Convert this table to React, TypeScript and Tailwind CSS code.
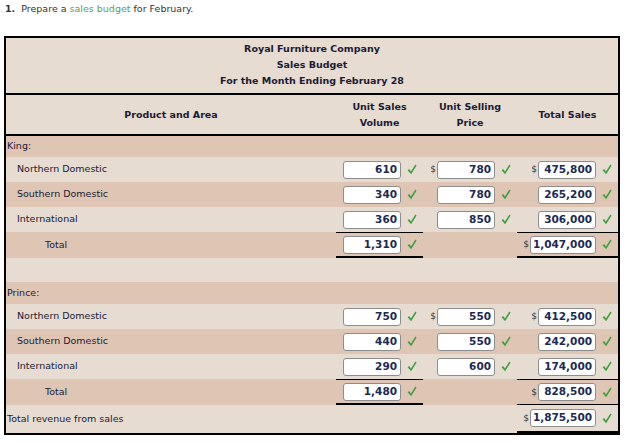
const font = { fontFamily: '"DejaVu Sans", Verdana, sans-serif' }

const COLS = 'grid grid-cols-[330px_87px_94px_101px]'
const LIGHT = 'bg-[#e6dcd1]'
const DARK = 'bg-[#dfc5b3]'

function Check() {
  return (
    <svg width="10" height="11" viewBox="0 0 10 11" className="block">
      <path d="M0.6 6.2 L2.2 5 L3.9 7.4 L8.4 0.6 L9.6 1.6 L4.1 10.2 Z" fill="#3f9f3f" />
    </svg>
  )
}

interface AmountProps {
  value: string
  dollar?: boolean
  wide?: boolean
}

function Amount({ value, dollar, wide }: AmountProps) {
  return (
    <div className="flex h-full items-center justify-end">
      {dollar && <span className="mr-[1px] text-[9px] leading-none text-[#333]">$</span>}
      <div
        className={`flex h-[18px] items-center justify-end rounded-[3px] border border-[#8d8d8d] bg-white pr-[3px] text-[10.5px] font-bold text-[#1c2a52] ${
          wide ? 'w-[66px]' : 'w-[58px]'
        }`}
      >
        {value}
      </div>
      <div className="flex w-[22px] justify-center">
        <Check />
      </div>
    </div>
  )
}

interface RowProps {
  label: string
  indent?: 'none' | 'item' | 'total'
  bg: string
  h: string
  vol?: AmountProps
  price?: AmountProps
  total?: AmountProps
  volLine?: string
  totalLine?: string
}

function Row({ label, indent = 'none', bg, h, vol, price, total, volLine = '', totalLine = '' }: RowProps) {
  const pad = indent === 'item' ? 'pl-[11px]' : indent === 'total' ? 'pl-[39px]' : 'pl-[1px]'
  return (
    <div className={`${COLS} ${bg} ${h}`}>
      <div className={`flex items-center ${pad}`}>{label}</div>
      <div className={volLine}>{vol && <Amount {...vol} />}</div>
      <div>{price && <Amount {...price} />}</div>
      <div className={totalLine}>{total && <Amount {...total} />}</div>
    </div>
  )
}

function Group({ name, nameH, rows, totalVol, totalSales, last }: {
  name: string
  nameH: string
  rows: { label: string; vol: string; price: string; total: string }[]
  totalVol: string
  totalSales: string
  last?: boolean
}) {
  return (
    <>
      <Row label={name} bg={DARK} h={nameH} />
      {rows.map((r, i) => (
        <Row
          key={r.label}
          label={r.label}
          indent="item"
          bg={i % 2 === 0 ? LIGHT : DARK}
          h="h-[25px]"
          vol={{ value: r.vol }}
          price={{ value: r.price, dollar: i === 0 }}
          total={{ value: r.total, dollar: i === 0 }}
        />
      ))}
      <Row
        label="Total"
        indent="total"
        bg={DARK}
        h="h-[26px]"
        vol={{ value: totalVol }}
        total={{ value: totalSales, dollar: true, wide: totalSales.length > 7 }}
        volLine="border-t border-b-2 border-black"
        totalLine={last ? 'border-t border-b border-black' : 'border-t border-b-2 border-black'}
      />
    </>
  )
}

export default function App() {
  return (
    <div className="min-h-[447px] bg-white text-[9.5px] text-[#1b1b33]" style={font}>
      <div className="pl-[5px] pt-[2px] leading-[13px] text-[#333]">
        <span className="font-bold">1.</span>
        <span className="ml-[6px]">
          Prepare a <span className="text-[#5a9e5a]">sales budget</span> for February.
        </span>
      </div>

      <div className="ml-[4px] mt-[21px] w-[616px] border-2 border-black">
        <div className={`${LIGHT} flex h-[57px] flex-col items-center border-b-2 border-black pt-[3px] font-bold leading-[16px]`}>
          <div>Royal Furniture Company</div>
          <div>Sales Budget</div>
          <div>For the Month Ending February 28</div>
        </div>

        <div className={`${COLS} ${LIGHT} h-[41px] border-b-2 border-black font-bold leading-[16px]`}>
          <div className="flex items-center justify-center">Product and Area</div>
          <div className="flex flex-col items-center justify-center">
            <div>Unit Sales</div>
            <div>Volume</div>
          </div>
          <div className="flex flex-col items-center justify-center">
            <div>Unit Selling</div>
            <div>Price</div>
          </div>
          <div className="flex items-center justify-center">Total Sales</div>
        </div>

        <Group
          name="King:"
          nameH="h-[21px]"
          rows={[
            { label: 'Northern Domestic', vol: '610', price: '780', total: '475,800' },
            { label: 'Southern Domestic', vol: '340', price: '780', total: '265,200' },
            { label: 'International', vol: '360', price: '850', total: '306,000' },
          ]}
          totalVol="1,310"
          totalSales="1,047,000"
        />

        <Row label="" bg={LIGHT} h="h-[24px]" />

        <Group
          name="Prince:"
          nameH="h-[22px]"
          rows={[
            { label: 'Northern Domestic', vol: '750', price: '550', total: '412,500' },
            { label: 'Southern Domestic', vol: '440', price: '550', total: '242,000' },
            { label: 'International', vol: '290', price: '600', total: '174,000' },
          ]}
          totalVol="1,480"
          totalSales="828,500"
          last
        />

        <Row
          label="Total revenue from sales"
          bg={LIGHT}
          h="h-[28px]"
          total={{ value: '1,875,500', dollar: true, wide: true }}
          totalLine="border-b-2 border-black"
        />
      </div>
    </div>
  )
}
